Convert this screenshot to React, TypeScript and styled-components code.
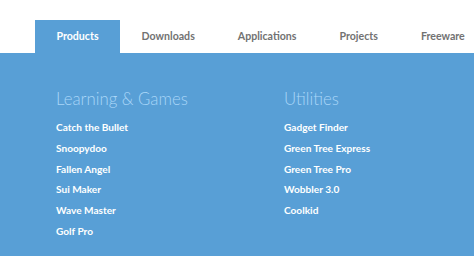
import React from 'react';
import styled, { createGlobalStyle } from 'styled-components';

const GlobalStyle = createGlobalStyle`
  html, body {
    margin: 0;
    padding: 0;
    background: #ffffff;
  }
  body {
    font-family: Lato, "Open Sans", sans-serif;
    -webkit-font-smoothing: antialiased;
  }
`;

const Page = styled.div`
  width: 474px;
  height: 256px;
  display: flex;
  flex-direction: column;
  overflow: hidden;
  background: #ffffff;
`;

const NavBar = styled.nav`
  display: flex;
  align-items: flex-end;
  height: 53px;
  padding-left: 35px;
  box-sizing: border-box;
`;

const Tab = styled.a<{ $active?: boolean }>`
  display: flex;
  align-items: center;
  height: 33px;
  padding: 0 21.5px 1px;
  box-sizing: border-box;
  font-size: 10.6px;
  font-weight: 700;
  color: ${p => (p.$active ? '#ffffff' : '#727272')};
  background: ${p => (p.$active ? '#589fd6' : 'transparent')};
  text-decoration: none;
  white-space: nowrap;
`;

const Panel = styled.section`
  flex: 1;
  background: #589fd6;
  display: grid;
  grid-template-columns: 228px 1fr;
  padding: 35px 0 0 56px;
`;

const Column = styled.div`
  display: flex;
  flex-direction: column;
`;

const Heading = styled.h2`
  margin: 0 0 8px;
  font-size: 16.8px;
  font-weight: 300;
  color: #a9d6f8;
  line-height: 21px;
`;

const Item = styled.a`
  font-size: 10.1px;
  font-weight: 700;
  color: #ffffff;
  line-height: 20.8px;
  text-decoration: none;
`;

const tabs = [
  { label: 'Products', active: true },
  { label: 'Downloads' },
  { label: 'Applications' },
  { label: 'Projects' },
  { label: 'Freeware' },
];

const columns = [
  {
    title: 'Learning & Games',
    items: ['Catch the Bullet', 'Snoopydoo', 'Fallen Angel', 'Sui Maker', 'Wave Master', 'Golf Pro'],
  },
  {
    title: 'Utilities',
    items: ['Gadget Finder', 'Green Tree Express', 'Green Tree Pro', 'Wobbler 3.0', 'Coolkid'],
  },
];

export default function App() {
  return (
    <Page>
      <GlobalStyle />
      <NavBar>
        {tabs.map(t => (
          <Tab key={t.label} $active={t.active}>
            {t.label}
          </Tab>
        ))}
      </NavBar>
      <Panel>
        {columns.map(c => (
          <Column key={c.title}>
            <Heading>{c.title}</Heading>
            {c.items.map(i => (
              <Item key={i}>{i}</Item>
            ))}
          </Column>
        ))}
      </Panel>
    </Page>
  );
}
